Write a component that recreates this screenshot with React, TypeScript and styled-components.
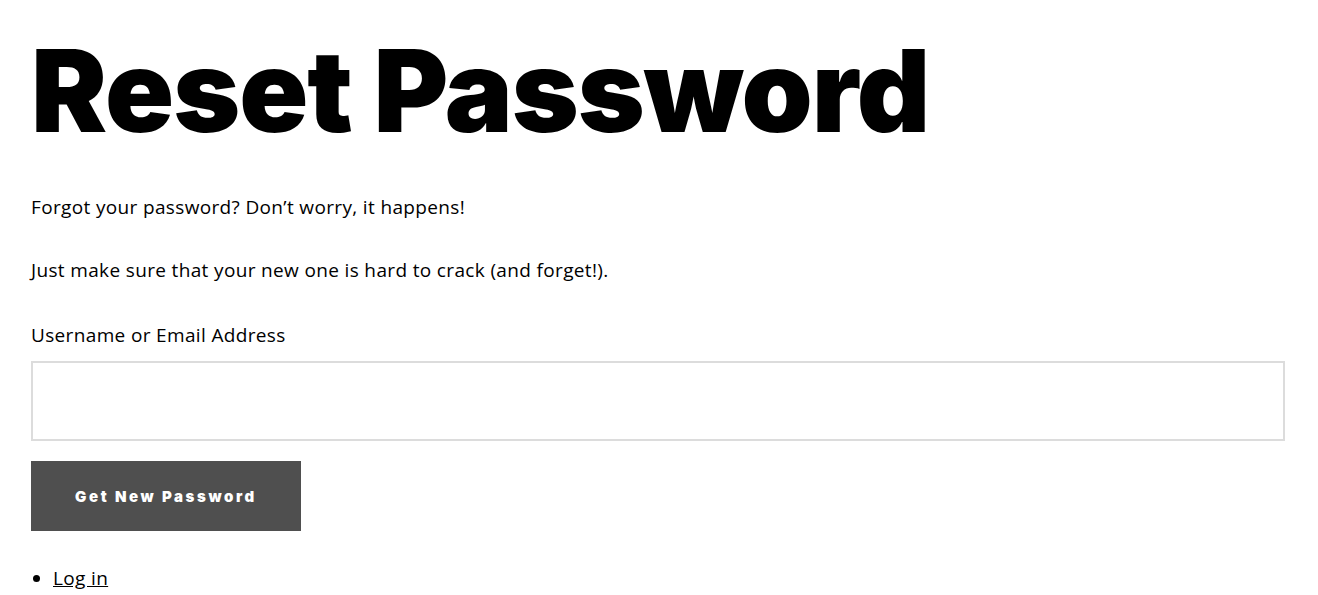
import styled, { createGlobalStyle } from "styled-components";

const GlobalStyle = createGlobalStyle`
  html, body {
    margin: 0;
    padding: 0;
    background: #ffffff;
  }
  body {
    font-family: "Open Sans", "Liberation Sans", sans-serif;
    color: #000000;
  }
`;

const Page = styled.main`
  padding: 26px 33px 0 31px;
`;

const Title = styled.h1`
  margin: 0 0 38px;
  font-family: Inter, "Liberation Sans", sans-serif;
  font-weight: 900;
  font-size: 114px;
  line-height: 130px;
  letter-spacing: -1px;
`;

const Text = styled.p`
  margin: 0 0 37px;
  font-size: 19px;
  line-height: 26px;
  letter-spacing: 0.35px;
`;

const Form = styled.form`
  display: flex;
  flex-direction: column;
`;

const Label = styled.label`
  margin: 2px 0 13px;
  font-size: 19px;
  line-height: 26px;
  letter-spacing: 0.35px;
`;

const Input = styled.input`
  box-sizing: border-box;
  width: 100%;
  height: 80px;
  border: 2px solid #dcdcdc;
  padding: 0 16px;
  font-size: 17px;
  font-family: inherit;
  outline: none;
`;

const Button = styled.button`
  align-self: flex-start;
  margin-top: 20px;
  width: 270px;
  height: 70px;
  border: none;
  background: #4f4f4f;
  color: #ffffff;
  font-family: Inter, "Liberation Sans", sans-serif;
  font-weight: 900;
  font-size: 15px;
  letter-spacing: 2.6px;
  cursor: pointer;
`;

const Links = styled.ul`
  margin: 34px 0 0;
  padding-left: 22px;
  font-size: 19px;
  line-height: 26px;
  letter-spacing: 0.35px;
`;

const Link = styled.a`
  color: #000000;
  text-decoration: underline;
`;

export default function App() {
  return (
    <>
      <GlobalStyle />
      <Page>
        <Title>Reset Password</Title>
        <Text>Forgot your password? Don’t worry, it happens!</Text>
        <Text>Just make sure that your new one is hard to crack (and forget!).</Text>
        <Form onSubmit={(e) => e.preventDefault()}>
          <Label htmlFor="user_login">Username or Email Address</Label>
          <Input id="user_login" type="text" />
          <Button type="submit">Get New Password</Button>
        </Form>
        <Links>
          <li>
            <Link href="#">Log in</Link>
          </li>
        </Links>
      </Page>
    </>
  );
}
